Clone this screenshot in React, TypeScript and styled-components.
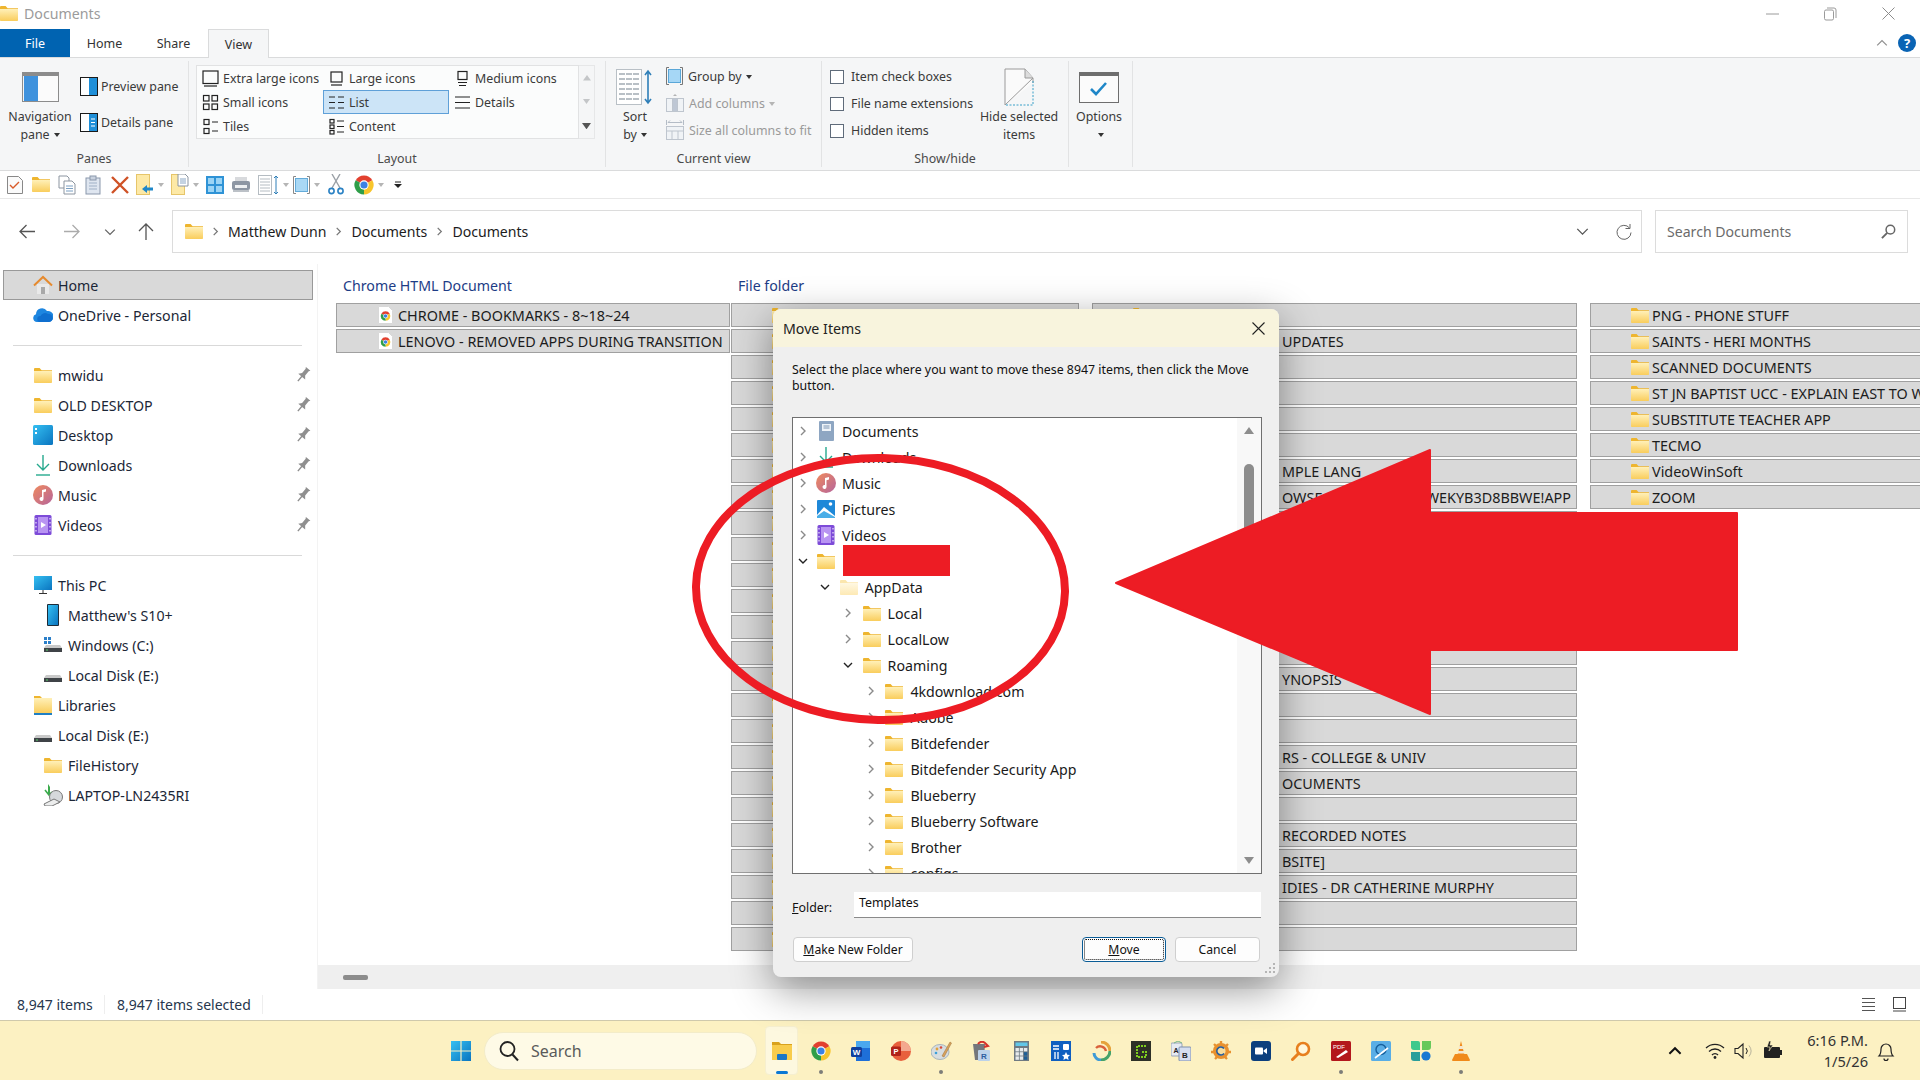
import React from 'react';
import styled, { createGlobalStyle } from 'styled-components';

const GlobalStyle = createGlobalStyle`
    html, body {
        margin: 0;
        padding: 0;
        width: 1920px;
        height: 1080px;
        overflow: hidden;
        background: #fff;
        font-family: 'Noto Sans', 'Open Sans', sans-serif;
    }
    * { box-sizing: border-box; }
    svg { display: block; flex: none; }
`;

const Desktop = styled.div`
    position: relative;
    width: 1920px;
    height: 1080px;
    display: flex;
    flex-direction: column;
    overflow: hidden;
`;

/* ---------- title bar and tabs ---------- */

const TitleBar = styled.div`
    height: 29px;
    display: flex;
    align-items: center;
    gap: 6px;
    padding-bottom: 2px;
    color: #9b9b9b;
    font-size: 14.2px;
`;

const WindowControls = styled.div`
    margin-left: auto;
    display: flex;
    padding-right: 3px;
`;

const WindowButton = styled.div`
    width: 58px;
    height: 27px;
    display: flex;
    align-items: center;
    justify-content: center;
`;

const TabBar = styled.div`
    height: 28px;
    display: flex;
    align-items: stretch;
    font-size: 12.5px;
    color: #333;
`;

const Tab = styled.div<{ $w: number; $file?: boolean; $active?: boolean }>`
    width: ${p => p.$w}px;
    display: flex;
    align-items: center;
    justify-content: center;
    background: ${p => (p.$file ? '#0063b1' : p.$active ? '#f5f6f7' : 'transparent')};
    color: ${p => (p.$file ? '#fff' : '#333')};
    border: ${p => (p.$active ? '1px solid #dadbdc' : 'none')};
    border-bottom: none;
    margin-bottom: ${p => (p.$active ? '-1px' : '0')};
    position: relative;
    z-index: 1;
`;

const TabRight = styled.div`
    margin-left: auto;
    display: flex;
    align-items: center;
    gap: 10px;
    padding-right: 4px;
`;

const HelpBadge = styled.div`
    width: 18px;
    height: 18px;
    border-radius: 50%;
    background: #0a64b4;
    color: #fff;
    font-size: 13px;
    font-weight: 700;
    display: flex;
    align-items: center;
    justify-content: center;
`;

/* ---------- ribbon ---------- */

const Ribbon = styled.div`
    height: 114px;
    display: flex;
    background: #f5f6f7;
    border-top: 1px solid #dadbdc;
    border-bottom: 1px solid #dadbdc;
    font-size: 12.4px;
    color: #3a3a3a;
`;

const Group = styled.div<{ $w: number }>`
    width: ${p => p.$w}px;
    margin: 3px 0 3px;
    border-right: 1px solid #e2e3e4;
    display: flex;
    flex-direction: column;
`;

const GroupBody = styled.div`
    height: 82px;
    margin-top: 5px;
    display: flex;
    align-items: flex-start;
`;

const GroupLabel = styled.div`
    flex: 1;
    display: flex;
    align-items: center;
    justify-content: center;
    padding-top: 3px;
    color: #4a4a4a;
    font-size: 12.4px;
`;

const LargeButton = styled.div<{ $w: number; $ml?: number }>`
    width: ${p => p.$w}px;
    margin-left: ${p => p.$ml ?? 0}px;
    display: flex;
    flex-direction: column;
    align-items: center;
    text-align: center;
    line-height: 18px;
`;

const LargeIcon = styled.div`
    height: 42px;
    display: flex;
    align-items: center;
    justify-content: center;
`;

const Caret = styled.span<{ $muted?: boolean }>`
    display: inline-block;
    width: 0;
    height: 0;
    border-left: 3.5px solid transparent;
    border-right: 3.5px solid transparent;
    border-top: 4px solid ${p => (p.$muted ? '#b5b5b5' : '#333')};
    margin-left: 4px;
    vertical-align: 2px;
`;

const SmallStack = styled.div<{ $gap: number; $mt: number; $ml: number }>`
    display: flex;
    flex-direction: column;
    gap: ${p => p.$gap}px;
    margin-top: ${p => p.$mt}px;
    margin-left: ${p => p.$ml}px;
`;

const SmallButton = styled.div<{ $muted?: boolean; $gap?: number }>`
    height: 24px;
    display: flex;
    align-items: center;
    gap: ${p => p.$gap ?? 4}px;
    white-space: nowrap;
    color: ${p => (p.$muted ? '#9a9a9a' : 'inherit')};
`;

const Gallery = styled.div`
    margin: -1px 0 0 7px;
    display: flex;
`;

const GalleryGrid = styled.div`
    width: 383px;
    height: 74px;
    background: #fbfcfc;
    border: 1px solid #e1e2e3;
    display: grid;
    grid-template-columns: 126px 126px 1fr;
    grid-auto-rows: 24px;
`;

const GalleryCell = styled.div<{ $selected?: boolean }>`
    display: flex;
    align-items: center;
    gap: 4px;
    white-space: nowrap;
    background: ${p => (p.$selected ? '#cce4f7' : 'transparent')};
    border: ${p => (p.$selected ? '1px solid #5fa0d8' : 'none')};
    padding-left: ${p => (p.$selected ? '4px' : '5px')};
`;

const GalleryScroll = styled.div`
    width: 16px;
    height: 74px;
    border: 1px solid #e6e7e8;
    border-left: none;
    display: flex;
    flex-direction: column;
    align-items: center;
    justify-content: space-around;
`;

const Check = styled.div`
    width: 14px;
    height: 14px;
    border: 1px solid #5f6b7a;
    background: #fff;
`;

/* ---------- quick access and address ---------- */

const QuickAccess = styled.div`
    height: 28px;
    display: flex;
    align-items: center;
    gap: 8px;
    padding-left: 6px;
    border-bottom: 1px solid #e8e8e8;
`;

const QuickItem = styled.div<{ $w: number }>`
    width: ${p => p.$w}px;
    display: flex;
    align-items: center;
`;

const AddressRow = styled.div`
    height: 65px;
    padding-top: 11px;
    display: flex;
    align-items: flex-start;
`;

const NavButtons = styled.div`
    width: 172px;
    height: 43px;
    display: flex;
    align-items: center;
`;

const NavSlot = styled.div<{ $w: number }>`
    width: ${p => p.$w}px;
    display: flex;
    justify-content: center;
`;

const AddressBox = styled.div`
    width: 1470px;
    height: 43px;
    border: 1px solid #dcdcdc;
    display: flex;
    align-items: center;
    padding: 0 0 1px 12px;
    font-size: 14.1px;
    color: #1c1c1c;
`;

const Crumb = styled.span`
    margin: 0 8px 0 8px;
    display: flex;
`;

const AddressEnd = styled.div`
    margin-left: auto;
    display: flex;
    align-items: center;
    gap: 27px;
    padding-right: 9px;
`;

const SearchBox = styled.div`
    width: 253px;
    height: 43px;
    margin-left: 13px;
    border: 1px solid #dcdcdc;
    display: flex;
    align-items: center;
    justify-content: space-between;
    padding: 0 11px;
    font-size: 14.1px;
    color: #6b6b6b;
`;

/* ---------- navigation pane ---------- */

const Main = styled.div`
    height: 725px;
    display: flex;
`;

const Sidebar = styled.div`
    width: 318px;
    flex: none;
    padding-top: 6px;
    border-right: 1px solid #f3f3f3;
    font-size: 14.2px;
    color: #1b2636;
`;

const NavRow = styled.div<{ $selected?: boolean; $level?: number }>`
    height: 30px;
    width: 310px;
    margin-left: 3px;
    display: flex;
    align-items: center;
    gap: 5px;
    padding-left: ${p => 29 + (p.$level ?? 0) * 10}px;
    padding-right: 1px;
    white-space: nowrap;
    background: ${p => (p.$selected ? '#d9d9d9' : 'transparent')};
    border: 1px solid ${p => (p.$selected ? '#999' : 'transparent')};
`;

const NavIcon = styled.span`
    width: 20px;
    display: flex;
    justify-content: center;
`;

const PinSlot = styled.span`
    margin-left: auto;
    display: flex;
`;

const NavDivider = styled.div`
    height: 1px;
    margin: 15px 15px 14px 13px;
    background: #d9d9d9;
`;

/* ---------- file list ---------- */

const ContentColumn = styled.div`
    flex: 1;
    min-width: 0;
    display: flex;
    flex-direction: column;
`;

const Files = styled.div`
    flex: 1;
    display: flex;
    padding-left: 18px;
    overflow: hidden;
`;

const FileColumn = styled.div<{ $w: number; $gap: number }>`
    width: ${p => p.$w}px;
    margin-right: ${p => p.$gap}px;
    flex: none;
`;

const ColumnHeader = styled.div`
    height: 39px;
    padding: 12px 0 0 7px;
    line-height: 20px;
    font-size: 14.2px;
    color: #1d3c86;
`;

const FileRow = styled.div`
    height: 24px;
    margin-bottom: 2px;
    background: #d9d9d9;
    border: 1px solid #a0a0a0;
    display: flex;
    align-items: center;
    padding-left: 40px;
    font-size: 14.4px;
    color: #1c1c1c;
    white-space: nowrap;
`;

const FileIcon = styled.span`
    width: 21px;
    display: flex;
    flex: none;
`;

const HiddenPart = styled.span<{ $w: number }>`
    width: ${p => p.$w}px;
    flex: none;
`;

const RowTail = styled.span`
    margin-left: auto;
    padding-right: 5px;
`;

const HScroll = styled.div`
    height: 24px;
    background: #efefef;
    display: flex;
    align-items: center;
    padding-left: 25px;
`;

const HThumb = styled.div`
    width: 25px;
    height: 5px;
    background: #8c8c8c;
    border-radius: 2px;
`;

/* ---------- status bar and taskbar ---------- */

const StatusBar = styled.div`
    height: 31px;
    display: flex;
    align-items: center;
    font-size: 14px;
    color: #26364d;
`;

const StatusItem = styled.div<{ $w: number; $pl: number }>`
    width: ${p => p.$w}px;
    padding-left: ${p => p.$pl}px;
    border-right: 1px solid #eeeeee;
    white-space: nowrap;
`;

const ViewIcons = styled.div`
    margin-left: auto;
    display: flex;
    gap: 16px;
    padding-right: 13px;
`;

const Taskbar = styled.div`
    height: 60px;
    flex: none;
    background: #fcf1c2;
    border-top: 1px solid #cfc9ac;
    display: flex;
    align-items: center;
    padding-left: 451px;
`;

const TaskSearch = styled.div`
    width: 273px;
    height: 38px;
    margin-left: 13px;
    border-radius: 19px;
    background: #fefae6;
    border: 1px solid #f3ecc9;
    display: flex;
    align-items: center;
    gap: 11px;
    padding-left: 13px;
    font-size: 16px;
    color: #5a5a5a;
`;

const TaskTile = styled.div`
    width: 33px;
    height: 49px;
    margin: 0 3px 0 8px;
    border-radius: 4px;
    background: #fdf8df;
    border: 1px solid #f6efcf;
    position: relative;
    display: flex;
    align-items: center;
    justify-content: center;
`;

const TaskSlot = styled.div`
    width: 40px;
    height: 49px;
    position: relative;
    display: flex;
    align-items: center;
    justify-content: center;
`;

const RunDot = styled.span`
    position: absolute;
    left: 50%;
    bottom: 1px;
    width: 4px;
    height: 4px;
    margin-left: -2px;
    border-radius: 50%;
    background: #7d7d78;
`;

const ActiveBar = styled.span`
    position: absolute;
    left: 50%;
    bottom: 0;
    width: 12px;
    height: 3px;
    margin-left: -6px;
    border-radius: 2px;
    background: #0a78d4;
`;

const Tray = styled.div`
    margin-left: auto;
    display: flex;
    align-items: center;
    padding-right: 25px;
`;

const TrayIcon = styled.span<{ $ml: number }>`
    margin-left: ${p => p.$ml}px;
    display: flex;
`;

const Clock = styled.div`
    margin: 0 9px 0 24px;
    text-align: right;
    font-size: 14.6px;
    line-height: 21px;
    color: #333;
    white-space: nowrap;
`;

/* ---------- move dialog ---------- */

const Dialog = styled.div`
    position: absolute;
    left: 773px;
    top: 309px;
    width: 506px;
    height: 668px;
    border-radius: 8px;
    background: #efefef;
    box-shadow: 0 12px 40px rgba(0, 0, 0, 0.42);
    overflow: hidden;
    display: flex;
    flex-direction: column;
`;

const DialogTitle = styled.div`
    height: 38px;
    flex: none;
    background: #f8f4dd;
    display: flex;
    align-items: center;
    justify-content: space-between;
    padding: 0 14px 0 10px;
    font-size: 14.2px;
    color: #222;
`;

const DialogBody = styled.div`
    position: relative;
    flex: 1;
    padding: 15px 17px 0 19px;
`;

const Description = styled.div`
    height: 31px;
    font-size: 12.35px;
    line-height: 16px;
    color: #111;
`;

const TreeBox = styled.div`
    height: 457px;
    margin-top: 24px;
    background: #fff;
    border: 1px solid #6f6f6f;
    display: flex;
    overflow: hidden;
`;

const TreeRows = styled.div`
    flex: 1;
    font-size: 14.2px;
    color: #1a1a1a;
`;

const TreeRow = styled.div<{ $level: number }>`
    height: 26px;
    display: flex;
    align-items: center;
    padding-left: ${p => 4 + p.$level * 22.8}px;
    white-space: nowrap;
`;

const TreeChevron = styled.span`
    width: 11px;
    display: flex;
    justify-content: center;
    margin-right: 8px;
`;

const TreeIcon = styled.span`
    width: 20px;
    display: flex;
    justify-content: center;
    margin-right: 6px;
`;

const TreeScroll = styled.div`
    width: 24px;
    background: #f8f8f8;
    position: relative;
    display: flex;
    flex-direction: column;
    align-items: center;
    justify-content: space-between;
    padding: 9px 0 9px;
`;

const TreeThumb = styled.div`
    position: absolute;
    top: 46px;
    left: 7px;
    width: 10px;
    height: 96px;
    border-radius: 5px;
    background: #8d8d8d;
`;

const FolderRow = styled.div`
    height: 26px;
    margin-top: 18px;
    display: flex;
    align-items: stretch;
    font-size: 12.4px;
    color: #111;
`;

const FolderLabel = styled.div`
    width: 62px;
    padding-top: 7px;
`;

const FolderInput = styled.div`
    flex: 1;
    margin-right: 1px;
    background: #fff;
    border-bottom: 1px solid #8a8a8a;
    padding: 2px 0 0 5px;
`;

const Buttons = styled.div`
    margin-top: 19px;
    display: flex;
    padding-left: 1px;
`;

const DialogButton = styled.div<{ $w: number; $ml?: string; $primary?: boolean }>`
    width: ${p => p.$w}px;
    height: 25px;
    margin-left: ${p => p.$ml ?? '0'};
    border-radius: 4px;
    background: #fdfdfd;
    border: 1px solid ${p => (p.$primary ? '#0a5c96' : '#cfcfcf')};
    outline: ${p => (p.$primary ? '1px dotted #111' : 'none')};
    outline-offset: -3px;
    display: flex;
    align-items: center;
    justify-content: center;
    font-size: 12.2px;
    color: #111;
`;

const Grip = styled.div`
    position: absolute;
    right: 2px;
    bottom: 2px;
    display: flex;
`;

const Annotations = styled.svg`
    position: absolute;
    left: 0;
    top: 0;
    pointer-events: none;
`;

/* ---------- icons ---------- */

const Defs = () => (
    <svg width="0" height="0" style={{ position: 'absolute' }}>
        <defs>
            <linearGradient id="folderBody" x1="0" y1="0" x2="0" y2="1">
                <stop offset="0" stopColor="#fff0b8" />
                <stop offset="1" stopColor="#f9cd5c" />
            </linearGradient>
            <linearGradient id="folderPale" x1="0" y1="0" x2="0" y2="1">
                <stop offset="0" stopColor="#fff8e2" />
                <stop offset="1" stopColor="#fde9b4" />
            </linearGradient>
            <linearGradient id="blueTile" x1="0" y1="0" x2="1" y2="1">
                <stop offset="0" stopColor="#35c0f2" />
                <stop offset="1" stopColor="#0a74bf" />
            </linearGradient>
            <linearGradient id="musicDisc" x1="0" y1="0" x2="1" y2="1">
                <stop offset="0" stopColor="#f08a5d" />
                <stop offset="1" stopColor="#b5659c" />
            </linearGradient>
        </defs>
    </svg>
);

const FolderGlyph = ({ w = 18, pale = false }: { w?: number; pale?: boolean }) => (
    <svg width={w} height={(w * 15) / 18} viewBox="0 0 18 15">
        <path d="M0 1.2C0 .5.5 0 1.2 0h4.4l2 2.2H18V5H0z" fill={pale ? '#fbe6ad' : '#eeb52f'} />
        <path d="M0 3h18v11.2a.8.8 0 0 1-.8.8H.8a.8.8 0 0 1-.8-.8z" fill={pale ? 'url(#folderPale)' : 'url(#folderBody)'} />
    </svg>
);

const ChromeGlyph = ({ size = 20 }: { size?: number }) => (
    <svg width={size} height={size} viewBox="0 0 24 24">
        <path d="M12 12L2.04 6.25A11.5 11.5 0 0 1 21.96 6.25Z" fill="#e2402f" />
        <path d="M12 12L21.96 6.25A11.5 11.5 0 0 1 12 23.5Z" fill="#f8c52c" />
        <path d="M12 12L12 23.5A11.5 11.5 0 0 1 2.04 6.25Z" fill="#2f9e49" />
        <circle cx="12" cy="12" r="5.6" fill="#fff" />
        <circle cx="12" cy="12" r="4.3" fill="#3b82e4" />
    </svg>
);

const ChromeDoc = () => (
    <svg width="15" height="18" viewBox="0 0 15 18" style={{ marginLeft: 1 }}>
        <path d="M.5.5h10l4 4v13H.5z" fill="#fff" stroke="#d8d8d8" />
        <g transform="translate(2.5 5) scale(.42)">
            <path d="M12 12L2.04 6.25A11.5 11.5 0 0 1 21.96 6.25Z" fill="#e2402f" />
            <path d="M12 12L21.96 6.25A11.5 11.5 0 0 1 12 23.5Z" fill="#f8c52c" />
            <path d="M12 12L12 23.5A11.5 11.5 0 0 1 2.04 6.25Z" fill="#2f9e49" />
            <circle cx="12" cy="12" r="5.6" fill="#fff" />
            <circle cx="12" cy="12" r="4.3" fill="#3b82e4" />
        </g>
    </svg>
);

const Chevron = ({ dir = 'right', color = '#8a8a8a', size = 9, width = 1.4 }: { dir?: 'right' | 'down' | 'up'; color?: string; size?: number; width?: number }) => {
    const d = dir === 'right' ? 'M3 1l4 4-4 4' : dir === 'down' ? 'M1 3l4 4 4-4' : 'M1 7l4-4 4 4';
    return (
        <svg width={size} height={size} viewBox="0 0 10 10">
            <path d={d} fill="none" stroke={color} strokeWidth={width} />
        </svg>
    );
};

const Triangle = ({ up = false, color = '#8d8d8d', w = 10 }: { up?: boolean; color?: string; w?: number }) => (
    <svg width={w} height={w * 0.7} viewBox="0 0 10 7">
        <path d={up ? 'M5 0l5 7H0z' : 'M0 0h10L5 7z'} fill={color} />
    </svg>
);

const LayoutIcon = ({ kind }: { kind: string }) => {
    const s = { fill: 'none', stroke: '#222', strokeWidth: 1.2 };
    return (
        <svg width="17" height="17" viewBox="0 0 17 17">
            {kind === 'xl' && (
                <>
                    <rect x="1" y="1" width="15" height="12.5" {...s} />
                    <path d="M2 16h13" {...s} />
                </>
            )}
            {kind === 'lg' && (
                <>
                    <rect x="3" y="2" width="11" height="10" {...s} />
                    <path d="M3 15h11" {...s} />
                </>
            )}
            {kind === 'md' && (
                <>
                    <rect x="4" y="1.5" width="9" height="8" {...s} />
                    <path d="M4 12.5h9M5 15.5h7" {...s} />
                </>
            )}
            {kind === 'sm' && (
                <>
                    <rect x="1.5" y="1.5" width="5.5" height="5.5" {...s} />
                    <rect x="10" y="1.5" width="5.5" height="5.5" {...s} />
                    <rect x="1.5" y="10" width="5.5" height="5.5" {...s} />
                    <rect x="10" y="10" width="5.5" height="5.5" {...s} />
                </>
            )}
            {kind === 'list' && <path d="M1 3h6M10 3h6M1 8.5h6M10 8.5h6M1 14h6M10 14h6" {...s} />}
            {kind === 'details' && <path d="M1 3h15M1 8.5h15M1 14h15" {...s} />}
            {kind === 'tiles' && (
                <>
                    <rect x="2" y="1.5" width="5" height="5" {...s} />
                    <rect x="2" y="10.5" width="5" height="5" {...s} />
                    <path d="M10 4h6M10 13h6" {...s} />
                </>
            )}
            {kind === 'content' && (
                <>
                    <rect x="2" y="1.5" width="4" height="3.5" {...s} />
                    <rect x="2" y="7" width="4" height="3.5" {...s} />
                    <rect x="2" y="12.5" width="4" height="3.5" {...s} />
                    <path d="M9 3h7M9 8.5h7M9 14h7" {...s} />
                </>
            )}
        </svg>
    );
};

const NavPaneIcon = () => (
    <svg width="37" height="30" viewBox="0 0 37 30">
        <rect x=".5" y=".5" width="36" height="29" fill="#f4f4f4" stroke="#8c8c8c" />
        <rect x="1" y="1" width="35" height="3" fill="#8c8c8c" />
        <rect x="2" y="4" width="14" height="25" fill="#3f92dd" />
        <rect x="16" y="4" width="20" height="25" fill="#fbfbfb" />
    </svg>
);

const PaneIcon = ({ lines = false }: { lines?: boolean }) => (
    <svg width="18" height="19" viewBox="0 0 18 19">
        <rect x=".5" y=".5" width="17" height="18" fill="#fff" stroke="#1a1a1a" />
        <rect x="9" y="1" width="8" height="17" fill="#1f8fd8" />
        {lines && <path d="M11 6h4M11 9.5h4M11 13h4" stroke="#fff" strokeWidth="1.2" />}
    </svg>
);

const SortIcon = () => (
    <svg width="38" height="36" viewBox="0 0 38 36">
        <rect x=".5" y=".5" width="25" height="35" fill="#fff" stroke="#b9c0c6" />
        {[5, 10, 15, 20, 25, 30].map(y => (
            <path key={y} d={`M3 ${y}h20`} stroke="#b9c0c6" strokeWidth="2" strokeDasharray="6 1" />
        ))}
        <path d="M32 3v30M29 6l3-4 3 4M29 30l3 4 3-4" fill="none" stroke="#2f7fb8" strokeWidth="1.6" />
    </svg>
);

const GroupByIcon = () => (
    <svg width="17" height="18" viewBox="0 0 17 18">
        <path d="M3 .5H.5v17H3M14 .5h2.5v17H14" fill="none" stroke="#777" />
        <rect x="2.5" y="2.5" width="12" height="13" fill="#a6d7f6" stroke="#5aa7d8" />
    </svg>
);

const AddColumnsIcon = () => (
    <svg width="18" height="18" viewBox="0 0 18 18" opacity=".6">
        <rect x=".5" y="4.5" width="17" height="13" fill="#eef2f6" stroke="#9aa6b4" />
        <rect x="6.5" y="4.5" width="5" height="13" fill="#9aa9bd" stroke="#9aa6b4" />
        <path d="M7 2l2-2 2 2z" fill="#888" />
    </svg>
);

const FitColumnsIcon = () => (
    <svg width="18" height="20" viewBox="0 0 18 20" opacity=".6">
        <path d="M.5 0v5M17.5 0v5M2 2.5h14M2 2.5l2-2M16 2.5l-2-2" fill="none" stroke="#8a97a6" />
        <rect x=".5" y="6.5" width="17" height="13" fill="#eef2f6" stroke="#9aa6b4" />
        <path d="M.5 11h17M6 11v8M12 11v8" stroke="#9aa6b4" />
    </svg>
);

const HideIcon = () => (
    <svg width="30" height="38" viewBox="0 0 30 38">
        <path d="M1 37V1h20l8 9v5" fill="#fafafa" stroke="#9a9a9a" />
        <path d="M21 1v9h8" fill="#dcdcdc" stroke="#9a9a9a" />
        <path d="M29 10L1 37" stroke="#9a9a9a" fill="none" />
        <path d="M29 13v24H2" fill="none" stroke="#3ba0c8" strokeDasharray="2 1.5" />
    </svg>
);

const OptionsIcon = () => (
    <svg width="40" height="31" viewBox="0 0 40 31">
        <rect x=".5" y=".5" width="39" height="30" fill="#fbfbfb" stroke="#6e6e6e" />
        <rect x="1" y="1" width="38" height="3" fill="#6e6e6e" />
        <path d="M12 17l5 5 10-11" fill="none" stroke="#1f87c8" strokeWidth="2.6" />
    </svg>
);

const QuickProps = () => (
    <svg width="18" height="20" viewBox="0 0 18 20">
        <path d="M1.5 1.5h11l4 4v13h-15z" fill="#fafafa" stroke="#888" />
        <path d="M4 10l3 3 6-6" fill="none" stroke="#d85a28" strokeWidth="1.4" />
    </svg>
);

const QuickCopy = () => (
    <svg width="18" height="20" viewBox="0 0 18 20">
        <path d="M1 1h8l2 2v10H1z" fill="#fff" stroke="#8c95a0" />
        <path d="M6 6h8l3 3v10H6z" fill="#fff" stroke="#8c95a0" />
        <path d="M8 11h7M8 13.5h7M8 16h7" stroke="#7b9fc2" />
    </svg>
);

const QuickPaste = () => (
    <svg width="18" height="20" viewBox="0 0 18 20">
        <rect x="2" y="3" width="14" height="16" fill="#dfe6f0" stroke="#8a97ab" />
        <rect x="6" y="1" width="6" height="4" fill="#c9d2df" stroke="#8a97ab" />
        <path d="M5 8h8M5 11h8M5 14h8" stroke="#9fb0c6" />
    </svg>
);

const QuickDelete = () => (
    <svg width="20" height="20" viewBox="0 0 20 20">
        <path d="M2 2l16 16M18 2L2 18" stroke="#cf5226" strokeWidth="2.4" />
    </svg>
);

const QuickMove = () => (
    <svg width="18" height="21" viewBox="0 0 18 21">
        <rect x=".5" y=".5" width="13" height="20" fill="#fde9a6" stroke="#e6c56a" />
        <path d="M6 15l5-4v2.5h6v3h-6V19z" fill="#1f87c8" />
    </svg>
);

const QuickCopyTo = () => (
    <svg width="18" height="21" viewBox="0 0 18 21">
        <rect x=".5" y=".5" width="13" height="20" fill="#fde9a6" stroke="#e6c56a" />
        <path d="M7 0h7l3 3v9H7z" fill="#fff" stroke="#8c95a0" />
        <path d="M9 5h6M9 7h6M9 9h6" stroke="#8aa6c4" />
    </svg>
);

const QuickWindows = () => (
    <svg width="18" height="18" viewBox="0 0 18 18">
        <rect width="18" height="18" fill="#2f93d6" />
        <path d="M2 2h6v6H2zM10 2h6v6h-6zM2 10h6v6H2zM10 10h6v6h-6z" fill="#9bd4f5" />
    </svg>
);

const QuickPrinter = () => (
    <svg width="18" height="16" viewBox="0 0 18 16">
        <rect x="3" y="0" width="12" height="5" fill="#d8dadd" />
        <rect x="0" y="4" width="18" height="9" rx="2" fill="#8d96a3" />
        <rect x="3" y="8" width="12" height="3" fill="#eef0f2" />
        <rect x="1" y="13" width="16" height="2" fill="#bcc1c7" />
    </svg>
);

const QuickRows = () => (
    <svg width="21" height="20" viewBox="0 0 21 20">
        <rect x=".5" y=".5" width="13" height="19" fill="#fff" stroke="#b5bcc2" />
        {[4, 7, 10, 13, 16].map(y => (
            <path key={y} d={`M2 ${y}h10`} stroke="#b5bcc2" />
        ))}
        <path d="M18 1v18M16 3l2-2 2 2M16 17l2 2 2-2" fill="none" stroke="#2f7fb8" />
    </svg>
);

const QuickBox = () => (
    <svg width="17" height="18" viewBox="0 0 17 18">
        <path d="M3 .5H.5v17H3M14 .5h2.5v17H14" fill="none" stroke="#888" />
        <rect x="2.5" y="2.5" width="12" height="13" fill="#a9d8f5" stroke="#64abd9" />
    </svg>
);

const QuickScissors = () => (
    <svg width="16" height="21" viewBox="0 0 16 21">
        <path d="M4 0l8 14M12 0L4 14" stroke="#9aa0a6" strokeWidth="1.4" />
        <circle cx="3.5" cy="17" r="2.6" fill="none" stroke="#2b82c4" strokeWidth="1.6" />
        <circle cx="12.5" cy="17" r="2.6" fill="none" stroke="#2b82c4" strokeWidth="1.6" />
    </svg>
);

const HomeIcon = () => (
    <svg width="20" height="20" viewBox="0 0 20 20">
        <path d="M4 9h12v10H4z" fill="#e9e9e9" />
        <rect x="8" y="12" width="4" height="7" fill="#a9a9a9" />
        <path d="M1 10.5L10 2l9 8.5" fill="none" stroke="#e68a2e" strokeWidth="2" />
    </svg>
);

const CloudIcon = () => (
    <svg width="20" height="16" viewBox="0 0 20 16">
        <path d="M4 15a4 4 0 0 1-1-7.8A6 6 0 0 1 14 4a4.5 4.5 0 0 1 2 11z" fill="#1d86e0" />
        <path d="M7 15a3 3 0 0 1 .5-6A5 5 0 0 1 15 7a4 4 0 0 1 1 8z" fill="#0f6fcf" />
    </svg>
);

const DesktopIcon = () => (
    <svg width="20" height="20" viewBox="0 0 20 20">
        <rect width="20" height="20" rx="1.5" fill="url(#blueTile)" />
        <path d="M2 3h2v2H2zM2 7h2v2H2z" fill="#fff" />
    </svg>
);

const DownloadIcon = () => (
    <svg width="16" height="21" viewBox="0 0 16 21">
        <path d="M8 0v15M2 9l6 6 6-6" fill="none" stroke="#26a98e" strokeWidth="1.4" />
        <path d="M1 20h14" stroke="#26a98e" strokeWidth="1.4" />
    </svg>
);

const MusicIcon = ({ size = 20 }: { size?: number }) => (
    <svg width={size} height={size} viewBox="0 0 20 20">
        <circle cx="10" cy="10" r="10" fill="url(#musicDisc)" />
        <path d="M9 5l4-1v2.5l-2.5.7V14a2 2 0 1 1-1.5-2z" fill="#fff" />
    </svg>
);

const VideoIcon = ({ size = 20 }: { size?: number }) => (
    <svg width={size} height={size} viewBox="0 0 20 20">
        <rect x="1.5" width="17" height="20" rx="1.5" fill="#7d4bd8" />
        <rect x="5" y="2" width="10" height="16" fill="#b894f2" />
        <path d="M8 7l5 3-5 3z" fill="#fff" />
        <path d="M3 3v1.5M3 7v1.5M3 11v1.5M3 15v1.5M17 3v1.5M17 7v1.5M17 11v1.5M17 15v1.5" stroke="#fff" />
    </svg>
);

const PcIcon = () => (
    <svg width="18" height="18" viewBox="0 0 18 18">
        <rect width="18" height="14" fill="url(#blueTile)" />
        <path d="M9 14v3M5 17.5h8" stroke="#333" />
    </svg>
);

const PhoneIcon = () => (
    <svg width="14" height="22" viewBox="0 0 14 22">
        <rect x="1" width="12" height="22" rx="1" fill="#1d2b38" />
        <rect x="2" y="1" width="10" height="20" fill="url(#blueTile)" />
    </svg>
);

const DriveIcon = ({ win = false }: { win?: boolean }) => (
    <svg width="18" height="16" viewBox="0 0 18 16">
        {win && <path d="M0 0h3v3H0zM4 0h3v3H4zM0 4h3v3H0zM4 4h3v3H4z" fill="#2b7fc9" />}
        <path d="M2 8h14l2 3H0z" fill="#c9c9c9" />
        <rect y="11" width="18" height="4" fill="#3f4347" />
        <rect x="2" y="12.5" width="2" height="1" fill="#58d068" />
    </svg>
);

const LibrariesIcon = () => (
    <svg width="18" height="20" viewBox="0 0 18 20">
        <path d="M0 1h6l2 2h10v3H0z" fill="#eeb52f" />
        <rect y="3" width="18" height="15" fill="url(#folderBody)" />
        <rect y="18" width="18" height="2" fill="#1f7fc4" />
    </svg>
);

const LaptopNetIcon = () => (
    <svg width="20" height="22" viewBox="0 0 20 22">
        <path d="M5 0l2 3v7H5z" fill="#3cab4d" />
        <path d="M2 6l4 5 3-3" fill="none" stroke="#3cab4d" strokeWidth="1.6" />
        <circle cx="13" cy="13" r="6.5" fill="#d6d9dc" stroke="#777" />
        <path d="M1 20l10-5 6 3-8 4H2z" fill="#eceded" stroke="#777" />
    </svg>
);

const PinIcon = () => (
    <svg width="16" height="16" viewBox="0 0 16 16">
        <g transform="rotate(40 8 8)">
            <path d="M5 0h6l-1 1.5V7l2.5 3h-9L6 7V1.5zM7.3 10h1.4v6H7.3z" fill="#8f8f8f" />
        </g>
    </svg>
);

const DocumentsIcon = () => (
    <svg width="15" height="20" viewBox="0 0 15 20">
        <rect width="15" height="20" rx="1" fill="#8ea6c2" />
        <rect x="3" y="3" width="9" height="7" fill="#eef3f8" />
        <path d="M4.5 5h6M4.5 7h6" stroke="#7e96b2" />
    </svg>
);

const PicturesIcon = () => (
    <svg width="18" height="18" viewBox="0 0 18 18">
        <rect width="18" height="18" rx="1" fill="#1e88d8" />
        <circle cx="13.5" cy="4" r="1.8" fill="#fff" />
        <path d="M0 15l7-8 11 9v2H0z" fill="#fff" />
        <path d="M0 16l7-5 11 6v1H0z" fill="#49aee8" />
    </svg>
);

const MagnifierIcon = ({ size = 15, color = '#666' }: { size?: number; color?: string }) => (
    <svg width={size} height={size} viewBox="0 0 16 16">
        <circle cx="10" cy="6" r="4.6" fill="none" stroke={color} strokeWidth="1.6" />
        <path d="M6.6 9.4L1 15" stroke={color} strokeWidth="2" />
    </svg>
);

const TaskMagnifier = () => (
    <svg width="22" height="22" viewBox="0 0 22 22">
        <circle cx="9.5" cy="9" r="7" fill="none" stroke="#222" strokeWidth="1.8" />
        <path d="M14.5 14.5L20 20.5" stroke="#222" strokeWidth="2" />
    </svg>
);

const StartLogo = () => (
    <svg width="20" height="20" viewBox="0 0 20 20">
        <path d="M0 0h9.4v9.4H0zM10.6 0H20v9.4h-9.4zM0 10.6h9.4V20H0zM10.6 10.6H20V20h-9.4z" fill="url(#blueTile)" />
    </svg>
);

const TaskExplorer = () => (
    <svg width="20" height="20" viewBox="0 0 20 20">
        <path d="M0 1h7l2 2h11v4H0z" fill="#d9a21d" />
        <rect y="4" width="20" height="15" fill="#f8cc4c" />
        <rect x="5" y="13" width="10" height="6" rx="1" fill="#1a76c4" />
    </svg>
);

const TaskWord = () => (
    <svg width="20" height="20" viewBox="0 0 20 20">
        <path d="M5 0h13a1 1 0 0 1 1 1v18a1 1 0 0 1-1 1H5z" fill="#1e6fd8" />
        <path d="M5 0h13a1 1 0 0 1 1 1v6H5z" fill="#4aa8ee" />
        <rect x="0" y="6" width="11" height="10" rx="1.5" fill="#0f3f9c" />
        <text x="5.5" y="14" textAnchor="middle" fontSize="8" fontWeight="700" fill="#fff" fontFamily="'Liberation Sans', sans-serif">W</text>
    </svg>
);

const TaskPowerPoint = () => (
    <svg width="20" height="20" viewBox="0 0 20 20">
        <circle cx="10" cy="10" r="10" fill="#e8603c" />
        <path d="M10 0a10 10 0 0 1 10 10H10z" fill="#f3a98f" />
        <rect x="0" y="5.5" width="10" height="9.5" rx="1.5" fill="#b02218" />
        <text x="5" y="13" textAnchor="middle" fontSize="7.5" fontWeight="700" fill="#fff" fontFamily="'Liberation Sans', sans-serif">P</text>
    </svg>
);

const TaskPaint = () => (
    <svg width="21" height="20" viewBox="0 0 21 20">
        <ellipse cx="9" cy="11" rx="9" ry="7.5" fill="#d7dde0" stroke="#a8b4ba" />
        <circle cx="6" cy="8" r="1.4" fill="#e2a23a" />
        <circle cx="10" cy="6.5" r="1.3" fill="#d84a3a" />
        <circle cx="5" cy="12" r="1.3" fill="#3ba0d8" />
        <path d="M11 15L19 1l1.5 1L13 16z" fill="#d8a35c" stroke="#9c6f37" strokeWidth=".5" />
    </svg>
);

const TaskRestore = () => (
    <svg width="20" height="20" viewBox="0 0 20 20">
        <path d="M2 3h12l-1 16H4z" fill="#74777c" />
        <rect x="7" y="9" width="12" height="11" rx="1" fill="#bcd2ea" />
        <text x="13" y="18" textAnchor="middle" fontSize="8" fontWeight="700" fill="#2c5ea0" fontFamily="'Liberation Sans', sans-serif">R</text>
        <path d="M7 3c2-3 6-3 8 0l2 2-4 1" fill="none" stroke="#d6332a" strokeWidth="2" />
    </svg>
);

const TaskCalculator = () => (
    <svg width="15" height="20" viewBox="0 0 15 20">
        <rect width="15" height="20" fill="#6f7a82" />
        <rect x="1.5" y="1.5" width="12" height="3.5" fill="#62c7e8" />
        {[0, 1, 2].map(r =>
            [0, 1, 2].map(c => (
                <rect key={`${r}${c}`} x={1.5 + c * 4.2} y={7 + r * 4.2} width="3.4" height="3.4" fill={c === 2 && r > 0 ? '#1e5f96' : '#e7eaec'} />
            ))
        )}
    </svg>
);

const TaskTools = () => (
    <svg width="20" height="20" viewBox="0 0 20 20">
        <rect width="20" height="20" fill="#0f5fc0" />
        <path d="M2 5h6M2 8h6M4 11v7M7 11v7" stroke="#fff" strokeWidth="1.3" />
        <rect x="12" y="3" width="6" height="6" rx="1" fill="#fff" />
        <path d="M15 11l1.3 2.8 2.7.3-2 2 .6 3-2.6-1.5-2.6 1.5.6-3-2-2 2.7-.3z" fill="#fff" />
    </svg>
);

const TaskSwirl = () => (
    <svg width="20" height="20" viewBox="0 0 20 20">
        <path d="M10 1a9 9 0 0 1 9 9" fill="none" stroke="#e5a23a" strokeWidth="3" />
        <path d="M19 10a9 9 0 0 1-9 9" fill="none" stroke="#45a36a" strokeWidth="3" />
        <path d="M10 19a7 7 0 0 1-7-7" fill="none" stroke="#3f9bd6" strokeWidth="3" />
        <path d="M5 7a6 6 0 0 1 10 3" fill="none" stroke="#d9603a" strokeWidth="2.4" />
    </svg>
);

const TaskGreen = () => (
    <svg width="20" height="20" viewBox="0 0 20 20">
        <rect width="20" height="20" fill="#2e3027" />
        <path d="M15 5H6v11h9v-5h-4" fill="none" stroke="#7fce1e" strokeWidth="2" strokeDasharray="2 1" />
    </svg>
);

const TaskAB = () => (
    <svg width="20" height="20" viewBox="0 0 20 20">
        <rect x="0" y="2" width="11" height="13" rx="1" fill="#e6eaf2" stroke="#98a4b8" />
        <rect x="8" y="6" width="12" height="14" rx="1" fill="#d5def0" stroke="#7f8fae" />
        <text x="5" y="12" textAnchor="middle" fontSize="7" fontWeight="700" fill="#222" fontFamily="'Liberation Sans', sans-serif">A</text>
        <text x="14" y="16.5" textAnchor="middle" fontSize="8" fontWeight="700" fill="#222" fontFamily="'Liberation Sans', sans-serif">B</text>
        <path d="M3 2l4-2 4 2" fill="none" stroke="#76b58a" />
    </svg>
);

const TaskGear = () => (
    <svg width="20" height="20" viewBox="0 0 20 20">
        <circle cx="10" cy="10" r="8" fill="#e8912e" />
        <path d="M10 0v5M3 3l3 3M17 3l-3 3M0 11h4M20 11h-4M4 18l3-3M16 18l-3-3" stroke="#e8912e" strokeWidth="2.4" />
        <circle cx="10" cy="10" r="4.6" fill="#f8dd9c" />
        <path d="M13 7.6a4 4 0 1 0 0 4.8" fill="none" stroke="#245a9c" strokeWidth="1.6" />
    </svg>
);

const TaskVideo = () => (
    <svg width="20" height="20" viewBox="0 0 20 20">
        <rect width="20" height="20" rx="3" fill="#0c3f7d" />
        <rect x="4" y="6.5" width="8" height="7" rx="1" fill="#fff" />
        <path d="M12.5 9.5l3.5-2.5v6l-3.5-2.5z" fill="#fff" />
    </svg>
);

const TaskSearchApp = () => (
    <svg width="20" height="20" viewBox="0 0 20 20">
        <circle cx="12" cy="8" r="6" fill="#fff7dc" stroke="#e77f1e" strokeWidth="2.6" />
        <path d="M7.5 12.5L1.5 18.5" stroke="#e77f1e" strokeWidth="3" strokeLinecap="round" />
    </svg>
);

const TaskPdf = () => (
    <svg width="20" height="20" viewBox="0 0 20 20">
        <rect width="20" height="20" rx="1.5" fill="#b3171c" />
        <text x="2" y="7.5" fontSize="6" fill="#fff" fontFamily="'Liberation Sans', sans-serif">PDF</text>
        <path d="M5 16l10-7 2 2-10 6z" fill="#fff" />
    </svg>
);

const TaskPen = () => (
    <svg width="20" height="20" viewBox="0 0 20 20">
        <rect width="20" height="20" rx="1.5" fill="#59aee6" />
        <circle cx="10" cy="8.5" r="5" fill="none" stroke="#155f9c" strokeWidth="1.4" />
        <path d="M4 17L17 7" stroke="#fff" strokeWidth="1.6" />
    </svg>
);

const TaskPetals = () => (
    <svg width="20" height="20" viewBox="0 0 20 20">
        <path d="M0 0h7a2 2 0 0 1 2 2v7H3a3 3 0 0 1-3-3z" fill="#3ec98c" />
        <path d="M11 0h9v6a3 3 0 0 1-3 3h-6z" fill="#68c95a" />
        <path d="M0 11h9v9H3a3 3 0 0 1-3-3z" fill="#2a9e9a" />
        <circle cx="15" cy="15" r="4.6" fill="#1a78d2" />
    </svg>
);

const TaskCone = () => (
    <svg width="18" height="20" viewBox="0 0 18 20">
        <path d="M9 0l3.5 14h-7z" fill="#f08a1a" />
        <path d="M7.2 5h3.6l.7 3H6.5zM6 10h6l.5 2.5h-7z" fill="#f4e7cf" />
        <path d="M3 13h12l3 6a1 1 0 0 1-1 1H1a1 1 0 0 1-1-1z" fill="#f08a1a" />
    </svg>
);

const WifiIcon = () => (
    <svg width="20" height="18" viewBox="0 0 20 18">
        <path d="M1 6a13 13 0 0 1 18 0M4 9.5a8.5 8.5 0 0 1 12 0M7 13a4 4 0 0 1 6 0" fill="none" stroke="#222" strokeWidth="1.3" />
        <circle cx="10" cy="15.5" r="1.4" fill="#222" />
    </svg>
);

const VolumeIcon = () => (
    <svg width="20" height="18" viewBox="0 0 20 18">
        <path d="M1 6.5h3L9 2v14l-5-4.5H1z" fill="none" stroke="#222" strokeWidth="1.1" />
        <path d="M12 6a4.5 4.5 0 0 1 0 6" fill="none" stroke="#222" />
        <path d="M15 3.5a9 9 0 0 1 0 11" fill="none" stroke="#b8b39c" />
    </svg>
);

const BatteryIcon = () => (
    <svg width="20" height="20" viewBox="0 0 20 20">
        <rect x="1" y="6" width="16" height="11" rx="1" fill="#222" />
        <rect x="17" y="9" width="2" height="5" fill="#222" />
        <path d="M6 0l-2 6h3l-1 4 4-6H7l1-4z" fill="#222" stroke="#fcf1c2" strokeWidth=".6" />
    </svg>
);

const BellIcon = () => (
    <svg width="18" height="22" viewBox="0 0 18 22">
        <path d="M2 16c2-2 2-4 2-7a5 5 0 0 1 10 0c0 3 0 5 2 7z" fill="none" stroke="#222" strokeWidth="1.2" />
        <path d="M7 18.5a2 2 0 0 0 4 0" fill="none" stroke="#222" strokeWidth="1.2" />
    </svg>
);

/* ---------- data ---------- */

const layoutCells = [
    { kind: 'xl', label: 'Extra large icons' },
    { kind: 'lg', label: 'Large icons' },
    { kind: 'md', label: 'Medium icons' },
    { kind: 'sm', label: 'Small icons' },
    { kind: 'list', label: 'List', selected: true },
    { kind: 'details', label: 'Details' },
    { kind: 'tiles', label: 'Tiles' },
    { kind: 'content', label: 'Content' },
];

const pinned = [
    { label: 'mwidu', icon: <FolderGlyph /> },
    { label: 'OLD DESKTOP', icon: <FolderGlyph /> },
    { label: 'Desktop', icon: <DesktopIcon /> },
    { label: 'Downloads', icon: <DownloadIcon /> },
    { label: 'Music', icon: <MusicIcon /> },
    { label: 'Videos', icon: <VideoIcon /> },
];

const drives = [
    { label: 'This PC', icon: <PcIcon />, level: 0 },
    { label: "Matthew's S10+", icon: <PhoneIcon />, level: 1 },
    { label: 'Windows (C:)', icon: <DriveIcon win />, level: 1 },
    { label: 'Local Disk (E:)', icon: <DriveIcon />, level: 1 },
    { label: 'Libraries', icon: <LibrariesIcon />, level: 0 },
    { label: 'Local Disk (E:)', icon: <DriveIcon />, level: 0 },
    { label: 'FileHistory', icon: <FolderGlyph />, level: 1 },
    { label: 'LAPTOP-LN2435RI', icon: <LaptopNetIcon />, level: 1 },
];

// only what stays visible right of the dialog, keyed by row
const thirdColumn: Record<number, string> = {
    1: 'UPDATES',
    6: 'MPLE LANG',
    7: 'OWSE',
    14: 'YNOPSIS',
    17: 'RS - COLLEGE & UNIV',
    18: 'OCUMENTS',
    20: 'RECORDED NOTES',
    21: 'BSITE]',
    22: 'IDIES - DR CATHERINE MURPHY',
};

const lastColumn = [
    'PNG - PHONE STUFF',
    'SAINTS - HERI MONTHS',
    'SCANNED DOCUMENTS',
    'ST JN BAPTIST UCC - EXPLAIN EAST TO WEST',
    'SUBSTITUTE TEACHER APP',
    'TECMO',
    'VideoWinSoft',
    'ZOOM',
];

const emptyRows = Array.from({ length: 25 }, (_, i) => i);

type TreeItem = { label: string; level: number; open?: boolean; icon?: React.ReactNode };

const treeItems: TreeItem[] = [
    { label: 'Documents', level: 0, icon: <DocumentsIcon /> },
    { label: 'Downloads', level: 0, icon: <DownloadIcon /> },
    { label: 'Music', level: 0, icon: <MusicIcon /> },
    { label: 'Pictures', level: 0, icon: <PicturesIcon /> },
    { label: 'Videos', level: 0, icon: <VideoIcon /> },
    { label: '', level: 0, open: true },
    { label: 'AppData', level: 1, open: true, icon: <FolderGlyph pale /> },
    { label: 'Local', level: 2 },
    { label: 'LocalLow', level: 2 },
    { label: 'Roaming', level: 2, open: true },
    { label: '4kdownload.com', level: 3 },
    { label: 'Adobe', level: 3 },
    { label: 'Bitdefender', level: 3 },
    { label: 'Bitdefender Security App', level: 3 },
    { label: 'Blueberry', level: 3 },
    { label: 'Blueberry Software', level: 3 },
    { label: 'Brother', level: 3 },
    { label: 'configs', level: 3 },
];

const taskApps: { icon: React.ReactNode; running?: boolean }[] = [
    { icon: <ChromeGlyph />, running: true },
    { icon: <TaskWord /> },
    { icon: <TaskPowerPoint /> },
    { icon: <TaskPaint />, running: true },
    { icon: <TaskRestore /> },
    { icon: <TaskCalculator /> },
    { icon: <TaskTools /> },
    { icon: <TaskSwirl /> },
    { icon: <TaskGreen /> },
    { icon: <TaskAB /> },
    { icon: <TaskGear /> },
    { icon: <TaskVideo /> },
    { icon: <TaskSearchApp /> },
    { icon: <TaskPdf />, running: true },
    { icon: <TaskPen /> },
    { icon: <TaskPetals /> },
    { icon: <TaskCone />, running: true },
];

/* ---------- page ---------- */

export default function App() {
    return (
        <Desktop>
            <GlobalStyle />
            <Defs />

            <TitleBar>
                <FolderGlyph />
                Documents
                <WindowControls>
                    <WindowButton>
                        <svg width="13" height="2" viewBox="0 0 13 2">
                            <path d="M0 1h13" stroke="#9a9a9a" />
                        </svg>
                    </WindowButton>
                    <WindowButton>
                        <svg width="13" height="14" viewBox="0 0 13 14">
                            <rect x=".5" y="3" width="9" height="10" rx="1.5" fill="none" stroke="#9a9a9a" />
                            <path d="M3 1h7a2 2 0 0 1 2 2v8" fill="none" stroke="#9a9a9a" />
                        </svg>
                    </WindowButton>
                    <WindowButton>
                        <svg width="13" height="13" viewBox="0 0 13 13">
                            <path d="M.5.5l12 12M12.5.5l-12 12" stroke="#8c8c8c" />
                        </svg>
                    </WindowButton>
                </WindowControls>
            </TitleBar>

            <TabBar>
                <Tab $w={70} $file>File</Tab>
                <Tab $w={69}>Home</Tab>
                <Tab $w={69}>Share</Tab>
                <Tab $w={61} $active>View</Tab>
                <TabRight>
                    <Chevron dir="up" size={12} width={1} color="#8f8f8f" />
                    <HelpBadge>?</HelpBadge>
                </TabRight>
            </TabBar>

            <Ribbon>
                <Group $w={189}>
                    <GroupBody>
                        <LargeButton $w={70} $ml={5}>
                            <LargeIcon>
                                <NavPaneIcon />
                            </LargeIcon>
                            <span>Navigation</span>
                            <span>pane<Caret /></span>
                        </LargeButton>
                        <SmallStack $gap={12} $mt={8} $ml={5}>
                            <SmallButton $gap={3}>
                                <PaneIcon />
                                Preview pane
                            </SmallButton>
                            <SmallButton $gap={3}>
                                <PaneIcon lines />
                                Details pane
                            </SmallButton>
                        </SmallStack>
                    </GroupBody>
                    <GroupLabel>Panes</GroupLabel>
                </Group>

                <Group $w={417}>
                    <GroupBody>
                        <Gallery>
                            <GalleryGrid>
                                {layoutCells.map(cell => (
                                    <GalleryCell key={cell.kind} $selected={cell.selected}>
                                        <LayoutIcon kind={cell.kind} />
                                        {cell.label}
                                    </GalleryCell>
                                ))}
                            </GalleryGrid>
                            <GalleryScroll>
                                <Triangle up w={8} color="#c4c6c8" />
                                <Triangle w={7} color="#c4c6c8" />
                                <Triangle w={9} color="#555" />
                            </GalleryScroll>
                        </Gallery>
                    </GroupBody>
                    <GroupLabel>Layout</GroupLabel>
                </Group>

                <Group $w={216}>
                    <GroupBody>
                        <LargeButton $w={48} $ml={5}>
                            <LargeIcon>
                                <SortIcon />
                            </LargeIcon>
                            <span>Sort</span>
                            <span>by<Caret /></span>
                        </LargeButton>
                        <SmallStack $gap={3} $mt={-2} $ml={7}>
                            <SmallButton $gap={5}>
                                <GroupByIcon />
                                <span>Group by<Caret /></span>
                            </SmallButton>
                            <SmallButton $muted $gap={5}>
                                <AddColumnsIcon />
                                <span>Add columns<Caret $muted /></span>
                            </SmallButton>
                            <SmallButton $muted $gap={5}>
                                <FitColumnsIcon />
                                Size all columns to fit
                            </SmallButton>
                        </SmallStack>
                    </GroupBody>
                    <GroupLabel>Current view</GroupLabel>
                </Group>

                <Group $w={247}>
                    <GroupBody>
                        <SmallStack $gap={3} $mt={-1.5} $ml={8}>
                            <SmallButton $gap={7}><Check />Item check boxes</SmallButton>
                            <SmallButton $gap={7}><Check />File name extensions</SmallButton>
                            <SmallButton $gap={7}><Check />Hidden items</SmallButton>
                        </SmallStack>
                        <LargeButton $w={86} $ml={3}>
                            <LargeIcon>
                                <HideIcon />
                            </LargeIcon>
                            <span>Hide selected</span>
                            <span>items</span>
                        </LargeButton>
                    </GroupBody>
                    <GroupLabel>Show/hide</GroupLabel>
                </Group>

                <Group $w={64}>
                    <GroupBody>
                        <LargeButton $w={60}>
                            <LargeIcon>
                                <OptionsIcon />
                            </LargeIcon>
                            <span>Options</span>
                            <span><Caret /></span>
                        </LargeButton>
                    </GroupBody>
                </Group>
            </Ribbon>

            <QuickAccess>
                <QuickItem $w={18}><QuickProps /></QuickItem>
                <QuickItem $w={18}><FolderGlyph /></QuickItem>
                <QuickItem $w={18}><QuickCopy /></QuickItem>
                <QuickItem $w={18}><QuickPaste /></QuickItem>
                <QuickItem $w={18}><QuickDelete /></QuickItem>
                <QuickItem $w={27}><QuickMove /><Caret $muted /></QuickItem>
                <QuickItem $w={27}><QuickCopyTo /><Caret $muted /></QuickItem>
                <QuickItem $w={18}><QuickWindows /></QuickItem>
                <QuickItem $w={18}><QuickPrinter /></QuickItem>
                <QuickItem $w={27}><QuickRows /><Caret $muted /></QuickItem>
                <QuickItem $w={27}><QuickBox /><Caret $muted /></QuickItem>
                <QuickItem $w={18}><QuickScissors /></QuickItem>
                <QuickItem $w={31}><ChromeGlyph /><Caret $muted /></QuickItem>
                <QuickItem $w={18}>
                    <svg width="10" height="8" viewBox="0 0 10 8">
                        <path d="M2 1h6" stroke="#222" />
                        <path d="M1 3h8L5 7z" fill="#222" />
                    </svg>
                </QuickItem>
            </QuickAccess>

            <AddressRow>
                <NavButtons>
                    <NavSlot $w={54}>
                        <svg width="16" height="15" viewBox="0 0 16 15">
                            <path d="M16 7.5H1M7.5 1L1 7.5 7.5 14" fill="none" stroke="#555" strokeWidth="1.3" />
                        </svg>
                    </NavSlot>
                    <NavSlot $w={35}>
                        <svg width="16" height="15" viewBox="0 0 16 15">
                            <path d="M0 7.5h15M8.5 1L15 7.5 8.5 14" fill="none" stroke="#ababab" strokeWidth="1.3" />
                        </svg>
                    </NavSlot>
                    <NavSlot $w={41}>
                        <Chevron dir="down" size={12} width={1.1} color="#666" />
                    </NavSlot>
                    <NavSlot $w={32}>
                        <svg width="16" height="17" viewBox="0 0 16 17">
                            <path d="M8 17V1M1 8l7-7 7 7" fill="none" stroke="#555" strokeWidth="1.3" />
                        </svg>
                    </NavSlot>
                </NavButtons>
                <AddressBox>
                    <FolderGlyph />
                    <Crumb><Chevron size={9} color="#777" /></Crumb>
                    Matthew Dunn
                    <Crumb><Chevron size={9} color="#777" /></Crumb>
                    Documents
                    <Crumb><Chevron size={9} color="#777" /></Crumb>
                    Documents
                    <AddressEnd>
                        <Chevron dir="down" size={13} width={1} color="#555" />
                        <svg width="16" height="17" viewBox="0 0 16 17">
                            <path d="M13.5 5A7 7 0 1 0 15 9.5M14 1v4.5H9.5" fill="none" stroke="#666" strokeWidth="1" />
                        </svg>
                    </AddressEnd>
                </AddressBox>
                <SearchBox>
                    Search Documents
                    <MagnifierIcon />
                </SearchBox>
            </AddressRow>

            <Main>
                <Sidebar>
                    <NavRow $selected>
                        <NavIcon><HomeIcon /></NavIcon>
                        Home
                    </NavRow>
                    <NavRow>
                        <NavIcon><CloudIcon /></NavIcon>
                        OneDrive - Personal
                    </NavRow>
                    <NavDivider />
                    {pinned.map(item => (
                        <NavRow key={item.label}>
                            <NavIcon>{item.icon}</NavIcon>
                            {item.label}
                            <PinSlot><PinIcon /></PinSlot>
                        </NavRow>
                    ))}
                    <NavDivider />
                    {drives.map((item, i) => (
                        <NavRow key={i} $level={item.level}>
                            <NavIcon>{item.icon}</NavIcon>
                            {item.label}
                        </NavRow>
                    ))}
                </Sidebar>

                <ContentColumn>
                    <Files>
                        <FileColumn $w={394} $gap={1}>
                            <ColumnHeader>Chrome HTML Document</ColumnHeader>
                            <FileRow>
                                <FileIcon><ChromeDoc /></FileIcon>
                                CHROME - BOOKMARKS - 8~18~24
                            </FileRow>
                            <FileRow>
                                <FileIcon><ChromeDoc /></FileIcon>
                                LENOVO - REMOVED APPS DURING TRANSITION
                            </FileRow>
                        </FileColumn>
                        <FileColumn $w={348} $gap={13}>
                            <ColumnHeader>File folder</ColumnHeader>
                            {emptyRows.map(i => (
                                <FileRow key={i}>
                                    <FileIcon><FolderGlyph /></FileIcon>
                                </FileRow>
                            ))}
                        </FileColumn>
                        <FileColumn $w={485} $gap={13}>
                            <ColumnHeader />
                            {emptyRows.map(i => (
                                <FileRow key={i}>
                                    <FileIcon><FolderGlyph /></FileIcon>
                                    <HiddenPart $w={128} />
                                    {thirdColumn[i]}
                                    {i === 7 && <RowTail>WEKYB3D8BBWE!APP</RowTail>}
                                </FileRow>
                            ))}
                        </FileColumn>
                        <FileColumn $w={500} $gap={0}>
                            <ColumnHeader />
                            {lastColumn.map(name => (
                                <FileRow key={name}>
                                    <FileIcon><FolderGlyph /></FileIcon>
                                    {name}
                                </FileRow>
                            ))}
                        </FileColumn>
                    </Files>
                    <HScroll>
                        <HThumb />
                    </HScroll>
                </ContentColumn>
            </Main>

            <StatusBar>
                <StatusItem $w={105} $pl={17}>8,947 items</StatusItem>
                <StatusItem $w={158} $pl={12}>8,947 items selected</StatusItem>
                <ViewIcons>
                    <svg width="15" height="15" viewBox="0 0 15 15">
                        <path d="M1 1.5h13M1 5.5h13M1 9.5h13M1 13.5h13" stroke="#555" />
                    </svg>
                    <svg width="15" height="15" viewBox="0 0 15 15">
                        <rect x="1.5" y=".5" width="12" height="11" fill="none" stroke="#444" />
                        <path d="M1 14h13" stroke="#444" />
                    </svg>
                </ViewIcons>
            </StatusBar>

            <Taskbar>
                <StartLogo />
                <TaskSearch>
                    <TaskMagnifier />
                    Search
                </TaskSearch>
                <TaskTile>
                    <TaskExplorer />
                    <ActiveBar />
                </TaskTile>
                {taskApps.map((app, i) => (
                    <TaskSlot key={i}>
                        {app.icon}
                        {app.running && <RunDot />}
                    </TaskSlot>
                ))}
                <Tray>
                    <TrayIcon $ml={0}><Chevron dir="up" size={14} width={1.4} color="#111" /></TrayIcon>
                    <TrayIcon $ml={23}><WifiIcon /></TrayIcon>
                    <TrayIcon $ml={9}><VolumeIcon /></TrayIcon>
                    <TrayIcon $ml={9}><BatteryIcon /></TrayIcon>
                    <Clock>
                        <div>6:16 P.M.</div>
                        <div>1/5/26</div>
                    </Clock>
                    <BellIcon />
                </Tray>
            </Taskbar>

            <Dialog>
                <DialogTitle>
                    Move Items
                    <svg width="13" height="13" viewBox="0 0 13 13">
                        <path d="M.5.5l12 12M12.5.5l-12 12" stroke="#222" strokeWidth="1.1" />
                    </svg>
                </DialogTitle>
                <DialogBody>
                    <Description>
                        Select the place where you want to move these 8947 items, then click the Move button.
                    </Description>
                    <TreeBox>
                        <TreeRows>
                            {treeItems.map((item, i) => (
                                <TreeRow key={i} $level={item.level}>
                                    <TreeChevron>
                                        <Chevron dir={item.open ? 'down' : 'right'} size={10} color={item.open ? '#222' : '#8a8a8a'} />
                                    </TreeChevron>
                                    <TreeIcon>{item.icon ?? <FolderGlyph />}</TreeIcon>
                                    {item.label}
                                </TreeRow>
                            ))}
                        </TreeRows>
                        <TreeScroll>
                            <Triangle up />
                            <TreeThumb />
                            <Triangle />
                        </TreeScroll>
                    </TreeBox>
                    <FolderRow>
                        <FolderLabel><u>F</u>older:</FolderLabel>
                        <FolderInput>Templates</FolderInput>
                    </FolderRow>
                    <Buttons>
                        <DialogButton $w={120}><span><u>M</u>ake New Folder</span></DialogButton>
                        <DialogButton $w={84} $ml="169px" $primary><span><u>M</u>ove</span></DialogButton>
                        <DialogButton $w={85} $ml="9px">Cancel</DialogButton>
                    </Buttons>
                    <Grip>
                        <svg width="13" height="13" viewBox="0 0 13 13">
                            <path d="M9 1h2v2H9zM5 5h2v2H5zM9 5h2v2H9zM1 9h2v2H1zM5 9h2v2H5zM9 9h2v2H9z" fill="#b5b5b5" />
                        </svg>
                    </Grip>
                </DialogBody>
            </Dialog>

            <Annotations width="1920" height="1080" viewBox="0 0 1920 1080">
                <rect x="843" y="545" width="107" height="31" fill="#ed1c24" />
                <ellipse cx="880.5" cy="589" rx="184.5" ry="131" transform="rotate(1 880 589)" fill="none" stroke="#ed1c24" strokeWidth="8" />
                <polygon points="1116,583 1430,450 1430,513 1737,513 1737,650 1430,650 1430,714" fill="#ed1c24" stroke="#ed1c24" strokeWidth="2" strokeLinejoin="round" />
            </Annotations>
        </Desktop>
    );
}
